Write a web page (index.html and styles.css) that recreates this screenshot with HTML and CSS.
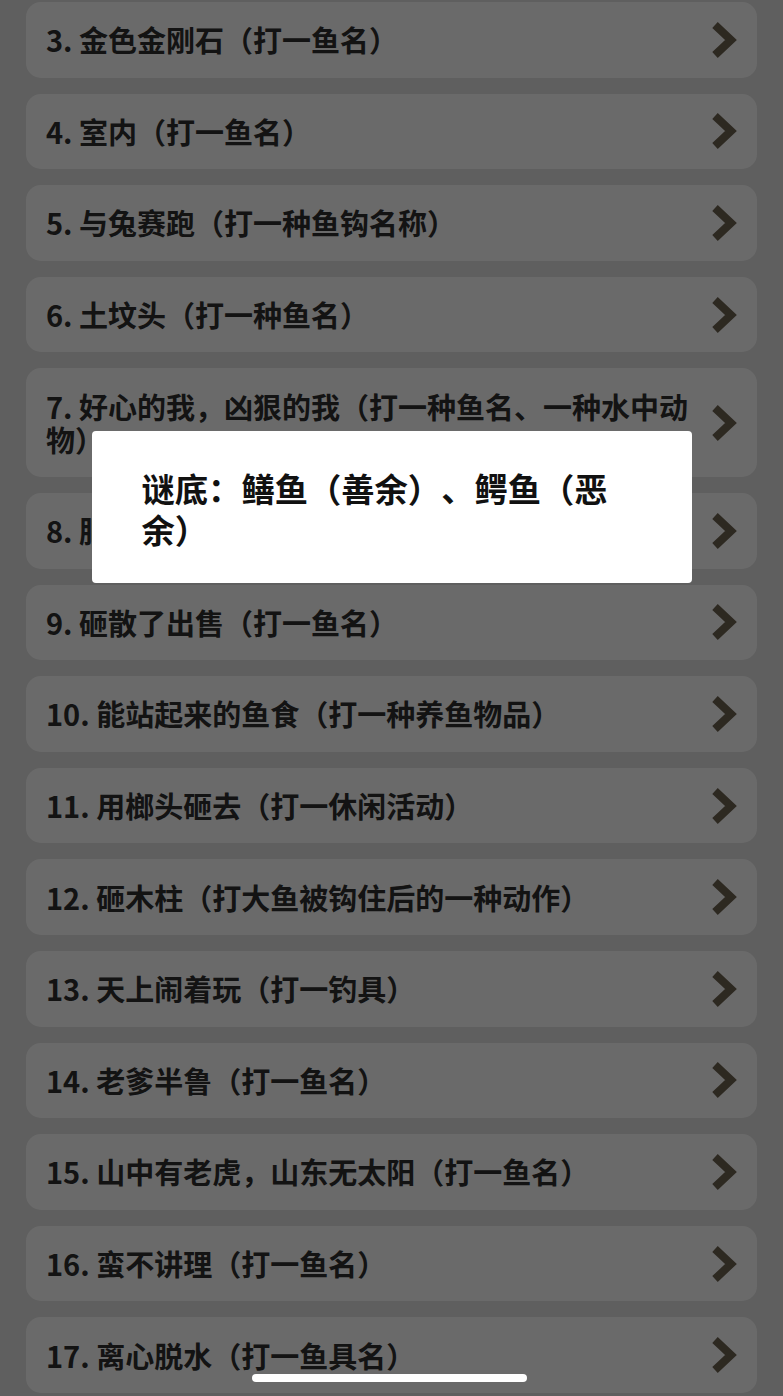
FILE: index.html
```html
<!DOCTYPE html>
<html lang="zh-CN">
<head>
<meta charset="utf-8">
<title>钓鱼谜语</title>
<link rel="stylesheet" href="styles.css">
</head>
<body>
<div class="page">
  <ul class="list">
    <li class="item"><span class="q">3. 金色金刚石（打一鱼名）</span><svg class="chev" viewBox="0 0 26 38"><polyline points="4,4 20,19 4,34"/></svg></li>
    <li class="item"><span class="q">4. 室内（打一鱼名）</span><svg class="chev" viewBox="0 0 26 38"><polyline points="4,4 20,19 4,34"/></svg></li>
    <li class="item"><span class="q">5. 与兔赛跑（打一种鱼钩名称）</span><svg class="chev" viewBox="0 0 26 38"><polyline points="4,4 20,19 4,34"/></svg></li>
    <li class="item"><span class="q">6. 土坟头（打一种鱼名）</span><svg class="chev" viewBox="0 0 26 38"><polyline points="4,4 20,19 4,34"/></svg></li>
    <li class="item"><span class="q">7. 好心的我，凶狠的我（打一种鱼名、一种水中动物）</span><svg class="chev" viewBox="0 0 26 38"><polyline points="4,4 20,19 4,34"/></svg></li>
    <li class="item"><span class="q">8. 肥水不流外人田（打一鱼名）</span><svg class="chev" viewBox="0 0 26 38"><polyline points="4,4 20,19 4,34"/></svg></li>
    <li class="item"><span class="q">9. 砸散了出售（打一鱼名）</span><svg class="chev" viewBox="0 0 26 38"><polyline points="4,4 20,19 4,34"/></svg></li>
    <li class="item"><span class="q">10. 能站起来的鱼食（打一种养鱼物品）</span><svg class="chev" viewBox="0 0 26 38"><polyline points="4,4 20,19 4,34"/></svg></li>
    <li class="item"><span class="q">11. 用榔头砸去（打一休闲活动）</span><svg class="chev" viewBox="0 0 26 38"><polyline points="4,4 20,19 4,34"/></svg></li>
    <li class="item"><span class="q">12. 砸木柱（打大鱼被钩住后的一种动作）</span><svg class="chev" viewBox="0 0 26 38"><polyline points="4,4 20,19 4,34"/></svg></li>
    <li class="item"><span class="q">13. 天上闹着玩（打一钓具）</span><svg class="chev" viewBox="0 0 26 38"><polyline points="4,4 20,19 4,34"/></svg></li>
    <li class="item"><span class="q">14. 老爹半鲁（打一鱼名）</span><svg class="chev" viewBox="0 0 26 38"><polyline points="4,4 20,19 4,34"/></svg></li>
    <li class="item"><span class="q">15. 山中有老虎，山东无太阳（打一鱼名）</span><svg class="chev" viewBox="0 0 26 38"><polyline points="4,4 20,19 4,34"/></svg></li>
    <li class="item"><span class="q">16. 蛮不讲理（打一鱼名）</span><svg class="chev" viewBox="0 0 26 38"><polyline points="4,4 20,19 4,34"/></svg></li>
    <li class="item"><span class="q">17. 离心脱水（打一鱼具名）</span><svg class="chev" viewBox="0 0 26 38"><polyline points="4,4 20,19 4,34"/></svg></li>
  </ul>
</div>
<div class="overlay">
  <div class="dialog">
    <p class="answer">谜底：鳝鱼（善余）、鳄鱼（恶余）</p>
  </div>
</div>
<div class="home-indicator"></div>
</body>
</html>
```

FILE: styles.css
```css
html, body {
  margin: 0;
  padding: 0;
}

body {
  width: 783px;
  height: 1396px;
  overflow: hidden;
  background: #e4e4e4;
  font-family: "Noto Sans CJK SC", "Noto Sans", sans-serif;
  text-spacing-trim: space-all;
  font-kerning: none;
  position: relative;
}

.page {
  padding: 2px 26px 0;
}

.list {
  list-style: none;
  margin: 0;
  padding: 0;
  display: flex;
  flex-direction: column;
  gap: 16px;
}

.item {
  display: flex;
  align-items: center;
  justify-content: space-between;
  gap: 10px;
  background: #ffffff;
  border-radius: 15px;
  padding: 0 20px;
}

.q {
  flex: 1;
  padding: 21.3px 0;
  font-size: 29px;
  line-height: 33px;
  font-weight: 600;
  color: #2e2e2e;
}

.chev {
  flex: none;
  width: 26px;
  height: 38px;
  margin: -4px 0;
}

.chev polyline {
  fill: none;
  stroke: #6e6351;
  stroke-width: 8;
  stroke-linejoin: miter;
  stroke-linecap: butt;
}

.overlay {
  position: fixed;
  inset: 0;
  background: rgba(0, 0, 0, 0.585);
  display: flex;
  justify-content: center;
  align-items: flex-start;
  padding-top: 431px;
}

.dialog {
  width: 600px;
  box-sizing: border-box;
  background: #ffffff;
  border-radius: 4px;
  padding: 36px 50px 34px;
}

.answer {
  margin: 0;
  font-size: 33.3px;
  line-height: 41px;
  font-weight: 600;
  color: #111111;
}

.home-indicator {
  position: fixed;
  left: 252px;
  bottom: 14px;
  width: 275px;
  height: 8px;
  border-radius: 4px;
  background: #ffffff;
}
```
